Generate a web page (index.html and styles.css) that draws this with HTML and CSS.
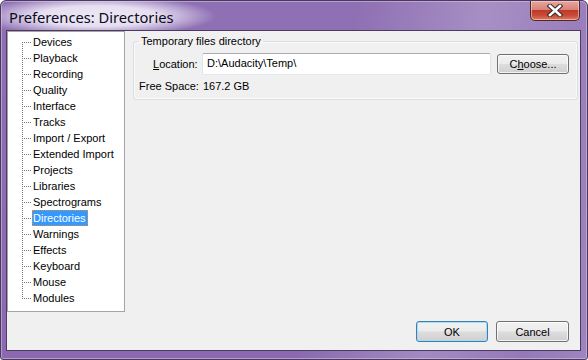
FILE: index.html
```html
<!DOCTYPE html>
<html>
<head>
<meta charset="utf-8">
<title>Preferences: Directories</title>
<link rel="stylesheet" href="styles.css">
</head>
<body>
<div class="window">
  <div class="titlebar">
    <span class="title">Preferences: Directories</span>
    <div class="close">
      <svg width="18" height="13" viewBox="0 0 18 13">
        <path d="M4 2 L14 11 M14 2 L4 11" stroke="#3a2a2a" stroke-width="4.6" stroke-linecap="square" fill="none"/>
        <path d="M4 2 L14 11 M14 2 L4 11" stroke="#ffffff" stroke-width="2.6" stroke-linecap="square" fill="none"/>
      </svg>
    </div>
  </div>
  <div class="client">
    <div class="main">
      <div class="tree">
        <ul class="tree-list">
          <li class="first"><span class="lbl">Devices</span></li>
          <li><span class="lbl">Playback</span></li>
          <li><span class="lbl">Recording</span></li>
          <li><span class="lbl">Quality</span></li>
          <li><span class="lbl">Interface</span></li>
          <li><span class="lbl">Tracks</span></li>
          <li><span class="lbl">Import / Export</span></li>
          <li><span class="lbl">Extended Import</span></li>
          <li><span class="lbl">Projects</span></li>
          <li><span class="lbl">Libraries</span></li>
          <li><span class="lbl">Spectrograms</span></li>
          <li><span class="lbl selected">Directories</span></li>
          <li><span class="lbl">Warnings</span></li>
          <li><span class="lbl">Effects</span></li>
          <li><span class="lbl">Keyboard</span></li>
          <li><span class="lbl">Mouse</span></li>
          <li class="last"><span class="lbl">Modules</span></li>
        </ul>
      </div>
      <div class="page">
        <fieldset class="group">
          <legend>Temporary files directory</legend>
          <div class="loc-row">
            <span class="loc-label"><u>L</u>ocation:</span>
            <div class="field">D:\Audacity\Temp\</div>
            <button class="btn choose">C<u>h</u>oose...</button>
          </div>
          <div class="free-row">
            <span>Free Space:</span>
            <span class="free-val">167.2 GB</span>
          </div>
        </fieldset>
      </div>
    </div>
    <div class="buttons">
      <button class="btn ok default">OK</button>
      <button class="btn cancel">Cancel</button>
    </div>
  </div>
</div>
</body>
</html>
```
FILE: styles.css
```css
* { box-sizing: border-box; }
html, body { margin: 0; padding: 0; }
body { width: 588px; height: 360px; overflow: hidden; background: #ffffff; }

.window {
  width: 588px;
  height: 360px;
  border: 1px solid #4a3a5e;
  border-radius: 6px 6px 3px 3px;
  padding: 0 6px 8px 5px;
  display: flex;
  flex-direction: column;
  background:
    linear-gradient(100deg, rgba(255,255,255,0) 0%, rgba(255,255,255,0) 55%, rgba(255,255,255,0.22) 75%, rgba(255,255,255,0.1) 90%, rgba(255,255,255,0.18) 100%),
    linear-gradient(to bottom, #8f70b4, #8a69b0);
  box-shadow: inset 0 0 0 1px rgba(230,215,245,0.45);
}

.titlebar {
  height: 29px;
  display: flex;
  align-items: flex-start;
  margin-left: -5px;
}
.title {
  font-family: "Noto Sans", "Open Sans", sans-serif;
  font-size: 14.7px;
  line-height: 20px;
  height: 29px;
  padding: 6px 40px 0 8px;
  margin-right: -20px;
  color: #0a0a20;
  border-radius: 6px 0 0 0;
  background: radial-gradient(ellipse 56% 70% at 45% 52%, rgba(240,235,247,0.96) 0%, rgba(240,235,247,0.9) 50%, rgba(236,229,245,0.55) 72%, rgba(236,229,245,0) 100%);
}
.close {
  margin-left: auto;
  margin-right: 1px;
  width: 50px;
  height: 20px;
  border: 1px solid #4b2a2a;
  border-top: none;
  border-radius: 0 0 5px 5px;
  background: linear-gradient(to bottom, #e9a69c 0%, #d98478 45%, #c0392b 50%, #c84a36 75%, #e07a5e 100%);
  box-shadow: inset 0 0 0 1px rgba(255,220,210,0.55);
  display: flex;
  align-items: center;
  justify-content: center;
}
.close svg { display: block; }

.client {
  height: 321px;
  border: 1px solid #4b3b5f;
  background: #f0f0f0;
  display: flex;
  flex-direction: column;
  font-family: "Liberation Sans", Arial, sans-serif;
  font-size: 11px;
  color: #000;
}

.main {
  display: flex;
  align-items: flex-start;
  height: 281px;
}

.tree {
  width: 118px;
  height: 281px;
  border: 1px solid #a5a5a5;
  background: #fff;
  padding-top: 2px;
}
.tree-list {
  list-style: none;
  margin: 0 0 0 14px;
  padding: 0;
}
.tree-list li {
  height: 16px;
  padding-left: 10px;
  background-image:
    repeating-linear-gradient(to bottom, #777 0 1px, transparent 1px 2px),
    repeating-linear-gradient(to right, #777 0 1px, transparent 1px 2px);
  background-size: 1px 16px, 9px 1px;
  background-position: 0 0, 0 8px;
  background-repeat: no-repeat;
}
.tree-list li.first {
  background-size: 1px 8px, 9px 1px;
  background-position: 0 8px, 0 8px;
}
.tree-list li.last {
  background-size: 1px 9px, 9px 1px;
  background-position: 0 0, 0 8px;
}
.lbl {
  display: inline-block;
  height: 16px;
  line-height: 14px;
  border: 1px solid transparent;
  padding: 0 1px 0 0;
  white-space: nowrap;
}
.lbl.selected {
  background: #3399ff;
  color: #fff;
  border: 1px dotted #d7904a;
}

.page {
  flex: 1;
  margin: 4px 2px 0 8px;
}

.group {
  margin: 0;
  padding: 5px 6px 6px 5px;
  border: 1px solid #d5dfe5;
  border-radius: 3px;
  box-shadow: inset 0 0 0 1px #fafafa;
  min-width: 0;
}
.group legend {
  padding: 0 2px;
  line-height: 13px;
  font-size: 11px;
}

.loc-row {
  display: flex;
  align-items: center;
  height: 22px;
}
.loc-label {
  margin-left: 14px;
  margin-right: 4px;
  width: 45px;
  white-space: nowrap;
}
.field {
  width: 289px;
  height: 22px;
  border: 1px solid #e2e3ea;
  border-top-color: #abadb3;
  border-bottom-color: #e3e9ef;
  border-radius: 2px;
  background: #fff;
  padding-left: 4px;
  line-height: 19px;
  white-space: nowrap;
}
.free-row {
  margin-top: 5px;
  line-height: 13px;
  display: flex;
  gap: 4px;
}

.btn {
  font-family: "Liberation Sans", Arial, sans-serif;
  font-size: 11px;
  color: #000;
  border: 1px solid #707070;
  border-radius: 3px;
  background: linear-gradient(to bottom, #f2f2f2 0%, #ebebeb 48%, #dddddd 52%, #cfcfcf 100%);
  box-shadow: inset 0 0 0 1px rgba(255,255,255,0.75);
  padding: 0;
  margin: 0;
}
.choose {
  margin-left: 6px;
  width: 72px;
  height: 20px;
}
.buttons {
  display: flex;
  justify-content: flex-end;
  gap: 8px;
  margin-top: 9px;
  padding-right: 11px;
}
.ok { width: 72px; height: 21px; }
.cancel { width: 73px; height: 21px; }
.btn.default {
  border-color: #3c7fb1;
  box-shadow: inset 0 0 0 1px #a8dcf5;
}
```
